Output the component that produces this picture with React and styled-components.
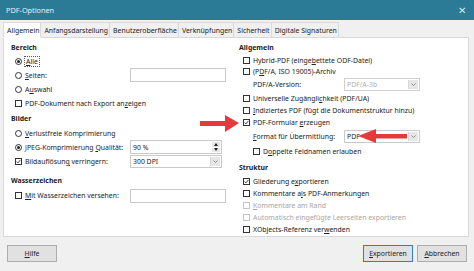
import React from 'react';
import styled, { createGlobalStyle } from 'styled-components';

const Global = createGlobalStyle`
  html, body { margin: 0; padding: 0; background: #f0f0f0; }
  body { font-family: "Noto Sans", "Open Sans", sans-serif; color: #222; }
`;

const Win = styled.div`
  position: relative;
  width: 474px;
  height: 271px;
  background: #f0f0f0;
  overflow: hidden;
  font-size: 6.9px;
`;

const TitleBar = styled.div`
  height: 20px;
  background: #2b7a96;
  color: #e8f2f5;
  display: flex;
  align-items: center;
  justify-content: space-between;
  padding: 0 8px 0 6px;
  font-size: 7.3px;
`;

const Close = styled.span`
  font-size: 10px;
  color: #dbe9ee;
`;

const Tabs = styled.div`
  display: flex;
  margin: 2px 0 0 3px;
  height: 15px;
`;

const Tab = styled.div`
  padding: 0 1px 0 3px;
  display: flex;
  align-items: center;
  background: ${p => (p.$active ? '#fff' : '#f0f0f0')};
  border: 1px solid #d9d9d9;
  border-bottom: ${p => (p.$active ? '1px solid #fff' : '1px solid #d9d9d9')};
  border-left: ${p => (p.$active ? '1px solid #d9d9d9' : 'none')};
  margin-bottom: -1px;
  position: relative;
  z-index: 1;
`;

const Panel = styled.div`
  margin: 0 5px 0 3px;
  height: 198px;
  background: #fff;
  border: 1px solid #d9d9d9;
  display: grid;
  grid-template-columns: 228px 1fr;
`;

const Col = styled.div`
  display: flex;
  flex-direction: column;
  padding: 3px 0 0 ${p => p.$pad}px;
`;

const Heading = styled.div`
  font-weight: 700;
  height: ${p => p.$h || 13}px;
  display: flex;
  align-items: center;
  margin-top: ${p => p.$mt || 0}px;
`;

const Row = styled.div`
  height: ${p => p.$h || 12}px;
  display: flex;
  align-items: center;
  padding-left: ${p => p.$indent || 0}px;
  color: ${p => (p.$off ? '#a6a6a6' : 'inherit')};
`;

const Label = styled.span`
  width: ${p => (p.$w ? p.$w + 'px' : 'auto')};
  flex-shrink: 0;
  white-space: nowrap;
`;

const U = styled.span`
  text-decoration: underline;
  text-underline-offset: 1px;
`;

const Focus = styled.span`
  outline: 1px dotted #555;
  outline-offset: 0;
  padding: 0 1px;
`;

const Box = styled.span`
  width: 5px;
  height: 5px;
  border: 1px solid ${p => (p.$off ? '#c4c4c4' : '#333')};
  background: #fff;
  margin-right: 3px;
  flex-shrink: 0;
  display: flex;
  align-items: center;
  justify-content: center;
`;

const Radio = styled.span`
  width: 5px;
  height: 5px;
  border: 1px solid #333;
  border-radius: 50%;
  margin-right: 3px;
  flex-shrink: 0;
  display: flex;
  align-items: center;
  justify-content: center;
  &::after {
    content: '';
    width: 3px;
    height: 3px;
    border-radius: 50%;
    background: ${p => (p.$on ? '#222' : 'transparent')};
  }
`;

const Field = styled.div`
  width: ${p => p.$w}px;
  height: ${p => p.$h || 13}px;
  box-sizing: border-box;
  border: 1px solid ${p => (p.$off ? '#d0d0d0' : '#c9c9c9')};
  background: #fff;
  display: flex;
  align-items: center;
  color: ${p => (p.$off ? '#b0b0b0' : '#222')};
`;

const FieldText = styled.span`
  flex: 1;
  padding-left: 2px;
`;

const DropBtn = styled.span`
  width: 9px;
  align-self: stretch;
  margin: 1px;
  background: #e6e6e6;
  border-left: 1px solid #d6d6d6;
  display: flex;
  align-items: center;
  justify-content: center;
`;

const Spin = styled.span`
  width: 8px;
  align-self: stretch;
  margin: 1px;
  display: flex;
  flex-direction: column;
  gap: 1px;
`;

const SpinHalf = styled.span`
  flex: 1;
  background: #e6e6e6;
  display: flex;
  align-items: center;
  justify-content: center;
`;

const Footer = styled.div`
  display: flex;
  justify-content: space-between;
  padding: 8px 7px 0 7px;
`;

const BtnGroup = styled.div`
  display: flex;
  gap: 4px;
`;

const Button = styled.div`
  width: 50px;
  height: 17px;
  box-sizing: border-box;
  background: #e1e1e1;
  border: 1px solid ${p => (p.$def ? '#2a7fd0' : '#adadad')};
  display: flex;
  align-items: center;
  justify-content: center;
`;

const Overlay = styled.svg`
  position: absolute;
  left: 0;
  top: 0;
  pointer-events: none;
`;

const Check = () => (
  <svg width="5" height="5" viewBox="0 0 5 5">
    <path d="M0.6 2.6 L2 3.9 L4.4 0.9" stroke="#333" strokeWidth="0.9" fill="none" />
  </svg>
);

const Chevron = () => (
  <svg width="5" height="3" viewBox="0 0 5 3">
    <path d="M0.5 0.5 L2.5 2.5 L4.5 0.5" stroke="#777" strokeWidth="0.8" fill="none" />
  </svg>
);

const Tri = ({ up }) => (
  <svg width="4" height="3" viewBox="0 0 4 3">
    <path d={up ? 'M0 3 L2 0 L4 3 Z' : 'M0 0 L2 3 L4 0 Z'} fill="#222" />
  </svg>
);

const CheckRow = ({ checked, off, indent, h, children }) => (
  <Row $indent={indent} $off={off} $h={h}>
    <Box $off={off}>{checked && <Check />}</Box>
    <Label>{children}</Label>
  </Row>
);

const Select = ({ w, off, children }) => (
  <Field $w={w} $off={off}>
    <FieldText>{children}</FieldText>
    <DropBtn>
      <Chevron />
    </DropBtn>
  </Field>
);

const tabs = ['Allgemein', 'Anfangsdarstellung', 'Benutzeroberfläche', 'Verknüpfungen', 'Sicherheit', 'Digitale Signaturen'];

export default function App() {
  return (
    <Win>
      <Global />
      <TitleBar>
        <span>PDF-Optionen</span>
        <Close>✕</Close>
      </TitleBar>
      <Tabs>
        {tabs.map((t, i) => (
          <Tab key={t} $active={i === 0}>{t}</Tab>
        ))}
      </Tabs>
      <Panel>
        <Col $pad={7}>
          <Heading>Bereich</Heading>
          <Row $h={14} $indent={4}>
            <Radio $on />
            <Label><Focus><U>A</U>lle</Focus></Label>
          </Row>
          <Row $h={14} $indent={4}>
            <Radio />
            <Label $w={105}><U>S</U>eiten:</Label>
            <Field $w={96} $h={14} />
          </Row>
          <Row $h={14} $indent={4}>
            <Radio />
            <Label>A<U>u</U>swahl</Label>
          </Row>
          <CheckRow indent={4} h={14}>PDF-Dokument nach Export an<U>z</U>eigen</CheckRow>
          <Heading $h={15} $mt={1}>Bilder</Heading>
          <Row $h={14} $indent={4}>
            <Radio />
            <Label><U>V</U>erlustfreie Komprimierung</Label>
          </Row>
          <Row $h={14} $indent={4}>
            <Radio $on />
            <Label $w={105}><U>J</U>PEG-Komprimierung <U>Q</U>ualität:</Label>
            <Field $w={92} $h={14}>
              <FieldText>90 %</FieldText>
              <Spin>
                <SpinHalf><Tri up /></SpinHalf>
                <SpinHalf><Tri /></SpinHalf>
              </Spin>
            </Field>
          </Row>
          <Row $h={15} $indent={4}>
            <Box><Check /></Box>
            <Label $w={105}>Bildauflösun<U>g</U> verringern:</Label>
            <Select w={92}>300 DPI</Select>
          </Row>
          <Heading $h={16} $mt={3}>Wasserzeichen</Heading>
          <Row $h={15} $indent={4}>
            <Box />
            <Label $w={105}><U>M</U>it Wasserzeichen versehen:</Label>
            <Field $w={96} $h={14} />
          </Row>
        </Col>
        <Col $pad={7}>
          <Heading>Allgemein</Heading>
          <CheckRow indent={4}>Hybrid-PDF (einge<U>b</U>ettete ODF-Datei)</CheckRow>
          <CheckRow indent={4} h={11}>(P<U>D</U>F/A, ISO 19005)-Archiv</CheckRow>
          <Row $h={15} $indent={14}>
            <Label $w={91}>PDF/A-Version:</Label>
            <Select w={76} off>PDF/A-3b</Select>
          </Row>
          <CheckRow indent={4}>Universelle Zugängli<U>c</U>hkeit (PDF/UA)</CheckRow>
          <CheckRow indent={4}><U>I</U>ndiziertes PDF (fügt die Dokumentstruktur hinzu)</CheckRow>
          <CheckRow indent={4} h={13} checked>PDF-Formular <U>e</U>rzeugen</CheckRow>
          <Row $h={15} $indent={14}>
            <Label $w={91}><U>F</U>ormat für Übermittlung:</Label>
            <Select w={76}>PDF</Select>
          </Row>
          <CheckRow indent={14} h={14}>D<U>o</U>ppelte Feldnamen erlauben</CheckRow>
          <Heading $h={15} $mt={2}>Struktur</Heading>
          <CheckRow indent={4} checked>Gliederung e<U>x</U>portieren</CheckRow>
          <CheckRow indent={4}>Kommentare a<U>l</U>s PDF-Anmerkungen</CheckRow>
          <CheckRow indent={4} off><U>K</U>ommentare am Rand</CheckRow>
          <CheckRow indent={4} off>Automatisch eingefügte Leerseiten exportieren</CheckRow>
          <CheckRow indent={4}>XObjects-Referenz ver<U>w</U>enden</CheckRow>
        </Col>
      </Panel>
      <Footer>
        <Button><span><U>H</U>ilfe</span></Button>
        <BtnGroup>
          <Button $def><span><U>E</U>xportieren</span></Button>
          <Button><span><U>A</U>bbrechen</span></Button>
        </BtnGroup>
      </Footer>
      <Overlay width="474" height="271">
        <path d="M200 121 L225 121 L225 115 L239 123 L225 132 L225 126 L200 126 Z" fill="#e23b3b" />
        <path d="M407 134 L376 134 L376 129 L358 136 L376 143 L376 138.5 L407 138.5 Z" fill="#e23b3b" />
      </Overlay>
    </Win>
  );
}
